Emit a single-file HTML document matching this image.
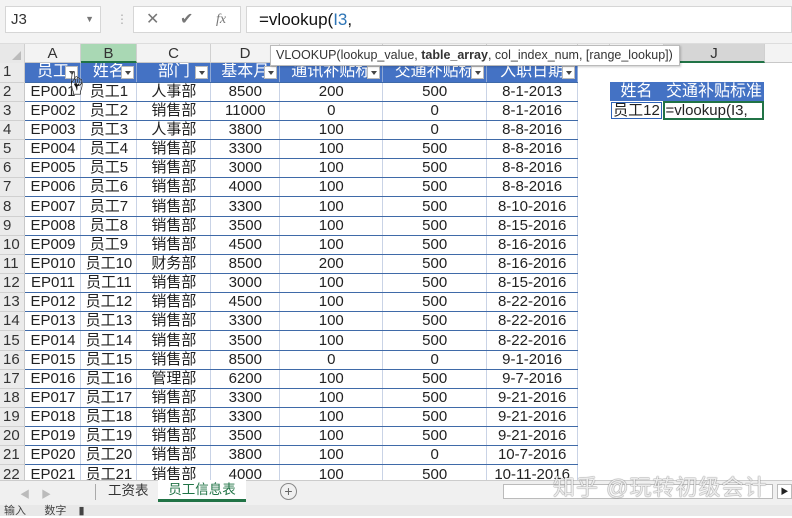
<!DOCTYPE html>
<html><head><meta charset="utf-8"><style>
*{box-sizing:border-box;margin:0;padding:0}
body{width:792px;height:516px;overflow:hidden;background:#fff;font-family:"Liberation Sans","Noto Sans CJK SC",sans-serif;position:relative;color:#222}
.abs{position:absolute}
#top{left:0;top:0;width:792px;height:44px;background:#f3f3f3;border-bottom:1px solid #ddd}
.box{position:absolute;background:#fff;border:1px solid #d6d6d6}
#colh{left:0;top:44px;height:19px;width:792px;background:#f3f3f3;border-bottom:1px solid #c8c8c8}
#colh div{position:absolute;top:0;height:19px;text-align:center;font-size:15px;line-height:19px;border-right:1px solid #d0d0d0;color:#333}
table{position:absolute;left:0;top:63px;border-collapse:collapse;table-layout:fixed;font-size:15px}
td{height:19.15px;padding:0;text-align:center;white-space:nowrap;overflow:hidden;border-right:1px solid #c9d3e6;border-bottom:1px solid #3f6aa8;line-height:18px}
td.r{background:#ebebeb;color:#333;border-bottom:1px solid #d0d0d0;border-right:1px solid #c8c8c8;text-align:left;padding-left:3px;font-size:15px}
td.e{border:none}
tr.h td.t{background:#4472c4;color:#fff;position:relative;text-align:center;border-right:1px solid #8fa9d6;font-size:16px}
.dd{position:absolute;right:2px;top:3px;width:13px;height:13px;background:#fff;border:1px solid #bbb}
.dd:after{content:"";position:absolute;left:3px;top:4px;border-left:3px solid transparent;border-right:3px solid transparent;border-top:4px solid #444}
</style></head><body>
<div id="top" class="abs">
 <div class="box" style="left:5px;top:6px;width:96px;height:27px;font-size:15px;line-height:25px;padding-left:5px;color:#333">J3<span style="position:absolute;right:6px;top:0;font-size:9px;color:#777">▼</span></div>
 <div class="abs" style="left:116px;top:12px;color:#aaa;font-size:12px">⋮</div>
 <div class="box" style="left:133px;top:6px;width:108px;height:27px;color:#777;font-size:16px;line-height:25px"><span style="position:absolute;left:12px">✕</span><span style="position:absolute;left:46px">✔</span><span style="position:absolute;left:82px;font-family:'Liberation Serif',serif;font-style:italic;font-size:14px">fx</span></div>
 <div class="box" style="left:246px;top:6px;width:546px;height:27px;font-size:17px;line-height:25px;padding-left:12px;color:#111">=vlookup(<span style="color:#2e75b6">I3</span>,</div>
</div>
<div id="colh" class="abs">
 <div style="left:0;width:25px;background:#e8e8e8"><span style="position:absolute;right:3px;bottom:3px;border-left:9px solid transparent;border-bottom:9px solid #bbb"></span></div>
 <div style="left:25px;width:56px">A</div>
 <div style="left:81px;width:56px;background:#a9d8b4;border-bottom:2px solid #217346">B</div>
 <div style="left:137px;width:74px">C</div>
 <div style="left:211px;width:69px">D</div>
 <div style="left:280px;width:103px">E</div>
 <div style="left:383px;width:104px">F</div>
 <div style="left:487px;width:91px">G</div>
 <div style="left:578px;width:32px">H</div>
 <div style="left:610px;width:54px">I</div>
 <div style="left:664px;width:101px;background:#d6d6d6;border-bottom:2px solid #217346">J</div>
</div>
<table>
<colgroup><col style="width:25px"><col style="width:56px"><col style="width:56px"><col style="width:74px"><col style="width:69px"><col style="width:103px"><col style="width:104px"><col style="width:91px"><col style="width:32px"><col style="width:54px"><col style="width:101px"><col style="width:27px"></colgroup>
<tr class="h"><td class="r">1</td><td class="t">员工<div class="dd"></div></td><td class="t">姓名<div class="dd"></div></td><td class="t">部门<div class="dd"></div></td><td class="t">基本月<div class="dd"></div></td><td class="t">通讯补贴标<div class="dd"></div></td><td class="t">交通补贴标<div class="dd"></div></td><td class="t">入职日期<div class="dd"></div></td><td class="e"></td><td class="e"></td><td class="e"></td><td class="e"></td></tr>
<tr><td class="r">2</td><td>EP001</td><td>员工1</td><td>人事部</td><td>8500</td><td>200</td><td>500</td><td>8-1-2013</td><td class="e"></td><td style="background:#4472c4;color:#fff;border:none;font-size:16px">姓名</td><td style="background:#4472c4;color:#fff;border:none;font-size:16px">交通补贴标准</td><td class="e"></td></tr>
<tr><td class="r">3</td><td>EP002</td><td>员工2</td><td>销售部</td><td>11000</td><td>0</td><td>0</td><td>8-1-2016</td><td class="e"></td><td style="outline:1px solid #2e63b8;outline-offset:-2px;border:none">员工12</td><td style="text-align:left;padding-left:2px;outline:2px solid #217346;outline-offset:-2px;border:none">=vlookup(I3,</td><td class="e"></td></tr>
<tr><td class="r">4</td><td>EP003</td><td>员工3</td><td>人事部</td><td>3800</td><td>100</td><td>0</td><td>8-8-2016</td><td class="e"></td><td class="e"></td><td class="e"></td><td class="e"></td></tr>
<tr><td class="r">5</td><td>EP004</td><td>员工4</td><td>销售部</td><td>3300</td><td>100</td><td>500</td><td>8-8-2016</td><td class="e"></td><td class="e"></td><td class="e"></td><td class="e"></td></tr>
<tr><td class="r">6</td><td>EP005</td><td>员工5</td><td>销售部</td><td>3000</td><td>100</td><td>500</td><td>8-8-2016</td><td class="e"></td><td class="e"></td><td class="e"></td><td class="e"></td></tr>
<tr><td class="r">7</td><td>EP006</td><td>员工6</td><td>销售部</td><td>4000</td><td>100</td><td>500</td><td>8-8-2016</td><td class="e"></td><td class="e"></td><td class="e"></td><td class="e"></td></tr>
<tr><td class="r">8</td><td>EP007</td><td>员工7</td><td>销售部</td><td>3300</td><td>100</td><td>500</td><td>8-10-2016</td><td class="e"></td><td class="e"></td><td class="e"></td><td class="e"></td></tr>
<tr><td class="r">9</td><td>EP008</td><td>员工8</td><td>销售部</td><td>3500</td><td>100</td><td>500</td><td>8-15-2016</td><td class="e"></td><td class="e"></td><td class="e"></td><td class="e"></td></tr>
<tr><td class="r">10</td><td>EP009</td><td>员工9</td><td>销售部</td><td>4500</td><td>100</td><td>500</td><td>8-16-2016</td><td class="e"></td><td class="e"></td><td class="e"></td><td class="e"></td></tr>
<tr><td class="r">11</td><td>EP010</td><td>员工10</td><td>财务部</td><td>8500</td><td>200</td><td>500</td><td>8-16-2016</td><td class="e"></td><td class="e"></td><td class="e"></td><td class="e"></td></tr>
<tr><td class="r">12</td><td>EP011</td><td>员工11</td><td>销售部</td><td>3000</td><td>100</td><td>500</td><td>8-15-2016</td><td class="e"></td><td class="e"></td><td class="e"></td><td class="e"></td></tr>
<tr><td class="r">13</td><td>EP012</td><td>员工12</td><td>销售部</td><td>4500</td><td>100</td><td>500</td><td>8-22-2016</td><td class="e"></td><td class="e"></td><td class="e"></td><td class="e"></td></tr>
<tr><td class="r">14</td><td>EP013</td><td>员工13</td><td>销售部</td><td>3300</td><td>100</td><td>500</td><td>8-22-2016</td><td class="e"></td><td class="e"></td><td class="e"></td><td class="e"></td></tr>
<tr><td class="r">15</td><td>EP014</td><td>员工14</td><td>销售部</td><td>3500</td><td>100</td><td>500</td><td>8-22-2016</td><td class="e"></td><td class="e"></td><td class="e"></td><td class="e"></td></tr>
<tr><td class="r">16</td><td>EP015</td><td>员工15</td><td>销售部</td><td>8500</td><td>0</td><td>0</td><td>9-1-2016</td><td class="e"></td><td class="e"></td><td class="e"></td><td class="e"></td></tr>
<tr><td class="r">17</td><td>EP016</td><td>员工16</td><td>管理部</td><td>6200</td><td>100</td><td>500</td><td>9-7-2016</td><td class="e"></td><td class="e"></td><td class="e"></td><td class="e"></td></tr>
<tr><td class="r">18</td><td>EP017</td><td>员工17</td><td>销售部</td><td>3300</td><td>100</td><td>500</td><td>9-21-2016</td><td class="e"></td><td class="e"></td><td class="e"></td><td class="e"></td></tr>
<tr><td class="r">19</td><td>EP018</td><td>员工18</td><td>销售部</td><td>3300</td><td>100</td><td>500</td><td>9-21-2016</td><td class="e"></td><td class="e"></td><td class="e"></td><td class="e"></td></tr>
<tr><td class="r">20</td><td>EP019</td><td>员工19</td><td>销售部</td><td>3500</td><td>100</td><td>500</td><td>9-21-2016</td><td class="e"></td><td class="e"></td><td class="e"></td><td class="e"></td></tr>
<tr><td class="r">21</td><td>EP020</td><td>员工20</td><td>销售部</td><td>3800</td><td>100</td><td>0</td><td>10-7-2016</td><td class="e"></td><td class="e"></td><td class="e"></td><td class="e"></td></tr>
<tr><td class="r">22</td><td>EP021</td><td>员工21</td><td>销售部</td><td>4000</td><td>100</td><td>500</td><td>10-11-2016</td><td class="e"></td><td class="e"></td><td class="e"></td><td class="e"></td></tr>
</table>
<div class="abs" style="left:270px;top:45px;width:410px;height:21px;background:#fff;border:1px solid #bbb;box-shadow:1px 1px 2px rgba(0,0,0,.2);font-size:12.5px;line-height:19px;padding-left:5px;color:#333;white-space:nowrap">VLOOKUP(lookup_value, <b>table_array</b>, col_index_num, [range_lookup])</div>
<div class="abs" style="left:64px;top:64px;font-size:24px;color:#111;text-shadow:0 0 1px #fff">☝</div>
<div class="abs" style="left:0;top:480px;width:792px;height:25px;background:#f0f0f0;border-top:1px solid #ccc"></div>
<div class="abs" style="left:20px;top:486px;color:#bbb;font-size:10px">◀ &nbsp;&nbsp; ▶</div>
<div class="abs" style="left:95px;top:484px;width:1px;height:16px;background:#aaa"></div>
<div class="abs" style="left:108px;top:482px;font-size:13.5px;line-height:18px;color:#333">工资表</div>
<div class="abs" style="left:158px;top:480px;width:88px;height:22px;background:#fff;border-bottom:3px solid #217346;font-size:13.5px;color:#217346;text-align:center;line-height:20px">员工信息表</div>
<div class="abs" style="left:280px;top:483px;width:17px;height:17px;border:1px solid #888;border-radius:50%;color:#666;font-size:14px;line-height:14px;text-align:center">+</div>
<div class="abs" style="left:503px;top:484px;width:270px;height:15px;background:#fff;border:1px solid #bbb"></div>
<div class="abs" style="left:777px;top:484px;width:15px;height:15px;background:#fff;border:1px solid #bbb;font-size:8px;text-align:center;line-height:13px">▶</div>
<div class="abs" style="left:553px;top:470px;font-size:22px;color:rgba(255,255,255,.85);text-shadow:0 0 1px #777,0 0 1px #777;letter-spacing:1px">知乎 @玩转初级会计</div>
<div class="abs" style="left:0;top:505px;width:792px;height:11px;background:#e8e8e8;font-size:11px;line-height:13px;color:#444;padding-left:4px">输入 &nbsp;&nbsp;&nbsp;&nbsp; 数字 &nbsp;&nbsp; ▮</div>
</body></html>
